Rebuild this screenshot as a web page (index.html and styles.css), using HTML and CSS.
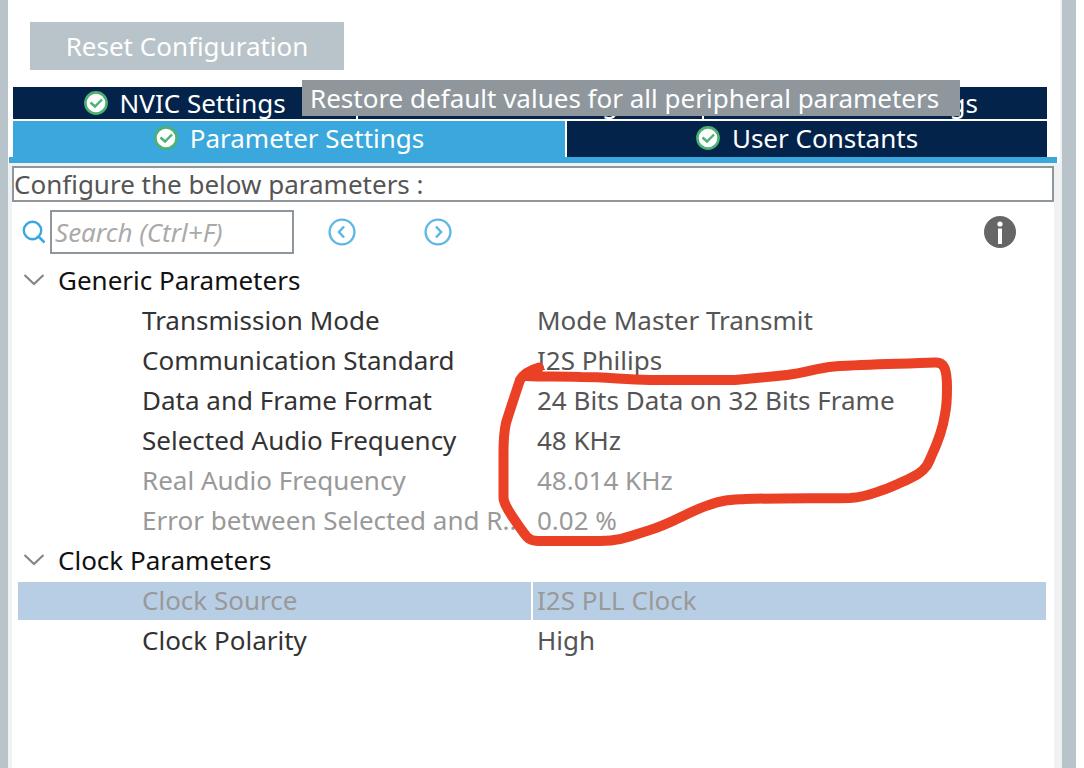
FILE: index.html
```html
<!DOCTYPE html>
<html lang="en">
<head>
<meta charset="utf-8">
<meta name="viewport" content="width=device-width, initial-scale=1">
<title>I2S Configuration</title>
<link rel="stylesheet" href="styles.css">
</head>
<body>
<svg class="defs" aria-hidden="true">
  <symbol id="check" viewBox="0 0 24 24">
    <circle cx="12" cy="12" r="10.6" fill="#fff" stroke="#4bb274" stroke-width="2.6"/>
    <path d="M6.5 11.5 11 15.5 18 8.5" fill="none" stroke="#4bb274" stroke-width="2.4"/>
  </symbol>
  <symbol id="chevron" viewBox="0 0 20 12">
    <path d="M0.5 1 10 10 19.5 1" fill="none" stroke="#858585" stroke-width="2.2"/>
  </symbol>
</svg>
<main class="panel">
  <header class="toolbar">
    <button class="reset" type="button" aria-describedby="reset-tip">Reset Configuration</button>
    <div class="tooltip" id="reset-tip" role="tooltip">Restore default values for all peripheral parameters</div>
  </header>
  <nav class="tabs" role="tablist">
    <div class="tab-row">
      <button class="tab" type="button" role="tab"><svg class="check"><use href="#check"/></svg>NVIC Settings</button>
      <button class="tab" type="button" role="tab"><svg class="check"><use href="#check"/></svg>DMA Settings</button>
      <button class="tab" type="button" role="tab"><svg class="check"><use href="#check"/></svg>GPIO Settings</button>
    </div>
    <div class="tab-row lower">
      <button class="tab active" type="button" role="tab" aria-selected="true"><svg class="check"><use href="#check"/></svg>Parameter Settings</button>
      <button class="tab constants" type="button" role="tab"><svg class="check"><use href="#check"/></svg>User Constants</button>
    </div>
  </nav>
  <section class="content">
    <p class="caption">Configure the below parameters :</p>
    <div class="search-bar">
      <label class="search-label" for="search" aria-label="Search">
        <svg class="search-icon" viewBox="0 0 24 24"><circle cx="10.5" cy="10.5" r="8.7" fill="none" stroke="#3aa8dc" stroke-width="2.4"/><path d="M14.5 17H17L22.5 22.5" fill="none" stroke="#3aa8dc" stroke-width="2.6"/></svg>
      </label>
      <input class="search" id="search" type="text" placeholder="Search (Ctrl+F)">
      <div class="steps">
        <button class="icon-button" type="button" aria-label="Previous"><svg viewBox="0 0 28 28"><circle cx="14" cy="14" r="12.4" fill="none" stroke="#5db9e4" stroke-width="2.4"/><path d="M16 8.5 11 14 16 19.5" fill="none" stroke="#5db9e4" stroke-width="2.6"/></svg></button>
        <button class="icon-button" type="button" aria-label="Next"><svg viewBox="0 0 28 28"><circle cx="14" cy="14" r="12.4" fill="none" stroke="#5db9e4" stroke-width="2.4"/><path d="M12 8.5 17 14 12 19.5" fill="none" stroke="#5db9e4" stroke-width="2.6"/></svg></button>
      </div>
      <button class="icon-button info" type="button" aria-label="Information"><svg viewBox="0 0 32 32"><circle cx="16" cy="16" r="16" fill="#666"/><circle cx="16" cy="8" r="2.6" fill="#fff"/><path d="M14 12.5h4V28h-4z" fill="#fff"/></svg></button>
    </div>
    <table class="params">
      <colgroup><col class="name-col"><col></colgroup>
      <tbody>
        <tr><th colspan="2"><button class="group" type="button" aria-expanded="true"><svg class="chevron"><use href="#chevron"/></svg>Generic Parameters</button></th></tr>
        <tr><td>Transmission Mode</td><td>Mode Master Transmit</td></tr>
        <tr><td>Communication Standard</td><td>I2S Philips</td></tr>
        <tr><td>Data and Frame Format</td><td>24 Bits Data on 32 Bits Frame</td></tr>
        <tr><td>Selected Audio Frequency</td><td>48 KHz</td></tr>
        <tr class="muted"><td>Real Audio Frequency</td><td>48.014 KHz</td></tr>
        <tr class="muted"><td>Error between Selected and R...</td><td>0.02 %</td></tr>
      </tbody>
      <tbody>
        <tr><th colspan="2"><button class="group" type="button" aria-expanded="true"><svg class="chevron"><use href="#chevron"/></svg>Clock Parameters</button></th></tr>
        <tr class="muted selected"><td>Clock Source</td><td>I2S PLL Clock</td></tr>
        <tr><td>Clock Polarity</td><td>High</td></tr>
      </tbody>
    </table>
  </section>
  <svg class="marker" viewBox="0 0 460 210" aria-hidden="true">
    <path d="M39 17.500C30 20 24 23 20 30C16 42 11 57 6 73C4 82 3.500 90 3.500 102V148C4 154 8 160 12 166C18 175 23 182 27 187C30 190 33 191 38 191H100C122 191 133 185 147 181C174 173 187 162 209 155C222 150 230 150 245 149C280 148 320 148.500 350 148C368 147 376 142 386 139C403 132 410 129 418 124C426 119 428 114 431 107C438 92 443 78 445 64C447 55 447 47 447 38C447 18 444 12 435 12.500C400 14 370 14 334 16.500C316 18 306 23 287 25C266 27 245 29 235 30H150C120 29 104 27 81 27C60 26 45 27 26 26"/>
  </svg>
</main>
</body>
</html>
```
FILE: styles.css
```css
* {
  box-sizing: border-box;
}

body {
  margin: 0;
  padding-right: 8px;
  background: #fff;
  color: #333;
  font-family: "Noto Sans", sans-serif;
  font-size: 26px;
  line-height: 36px;
}

button,
input {
  margin: 0;
  padding: 0;
  border: 0;
  background: none;
  color: inherit;
  font: inherit;
}

.defs {
  position: absolute;
  width: 0;
  height: 0;
}

.panel {
  position: relative;
  display: flex;
  flex-direction: column;
  min-height: 100vh;
  border: solid #b8c4ca;
  border-width: 0 14px 0 8px;
}

.toolbar {
  position: relative;
  padding: 22px 20px 17px 22px;
  border-right: 2px solid #eff1f3;
}

.reset {
  display: block;
  min-width: 314px;
  height: 48px;
  padding: 0 32px;
  background: #b8c4ca;
  color: #fff;
}

.tooltip {
  position: absolute;
  top: 80px;
  left: 294px;
  z-index: 2;
  min-width: 658px;
  padding: 0 8px;
  background: #8f979d;
  color: #fff;
  white-space: nowrap;
}

.tabs {
  padding: 0 3px 0 1px;
  border-right: 2px solid #eff1f3;
}

.tab-row {
  display: flex;
  gap: 2px;
  padding: 0 10px 2px 4px;
}

.tab-row.lower {
  padding-bottom: 0;
}

.tab {
  display: flex;
  flex: 1;
  align-items: center;
  justify-content: center;
  gap: 12px;
  height: 32px;
  background: #03234b;
  color: #fff;
  line-height: 32px;
  white-space: nowrap;
}

.lower .tab {
  height: 36px;
  padding-bottom: 2px;
}

.tab.active {
  flex: 23;
  background: #3aa8dc;
}

.tab.constants {
  flex: 20;
}

.tabs::after {
  content: "";
  display: block;
  height: 6px;
  background: #3aa8dc;
}

.check {
  flex: none;
  width: 24px;
  height: 24px;
}

.content {
  flex: 1;
  border: solid #eff1f3;
  border-width: 3px 8px 0 4px;
}

.caption {
  margin: 0;
  border: 2px solid #8f979d;
  line-height: 32px;
  color: #555;
}

.search-bar {
  display: flex;
  align-items: center;
  padding: 8px 38px 6px 10px;
}

.search-label {
  display: flex;
  width: 28px;
}

.search-icon {
  width: 24px;
  height: 24px;
}

.search {
  width: 244px;
  height: 44px;
  padding: 0 3px;
  border: 2px solid #8f979d;
}

.search::placeholder {
  color: #aaa;
  font-style: italic;
}

.steps {
  display: flex;
  gap: 68px;
  margin-left: 34px;
}

.icon-button {
  display: block;
  width: 28px;
  height: 28px;
}

.icon-button svg {
  display: block;
}

.info {
  width: 32px;
  height: 32px;
  margin-left: auto;
}

.params {
  width: calc(100% - 10px);
  margin-left: 4px;
  table-layout: fixed;
  border-spacing: 2px;
}

.name-col {
  width: 50%;
}

.params th,
.params td {
  height: 38px;
  padding: 0 0 2px;
  font-weight: 400;
  text-align: left;
  white-space: nowrap;
}

.params td:first-child {
  padding-left: 124px;
}

.params td:last-child {
  padding-left: 4px;
  color: #555;
}

.params .muted td {
  color: #999;
}

.selected td {
  background: #b8cee5;
}

.group {
  display: flex;
  align-items: center;
  gap: 14px;
  padding-left: 6px;
  color: #111;
}

.chevron {
  width: 20px;
  height: 12px;
}

.marker {
  position: absolute;
  top: 350px;
  left: 492px;
  width: 460px;
  height: 210px;
  overflow: visible;
  pointer-events: none;
}

.marker path {
  fill: none;
  stroke: #ea4025;
  stroke-width: 10px;
  stroke-linecap: round;
  stroke-linejoin: round;
}
```
